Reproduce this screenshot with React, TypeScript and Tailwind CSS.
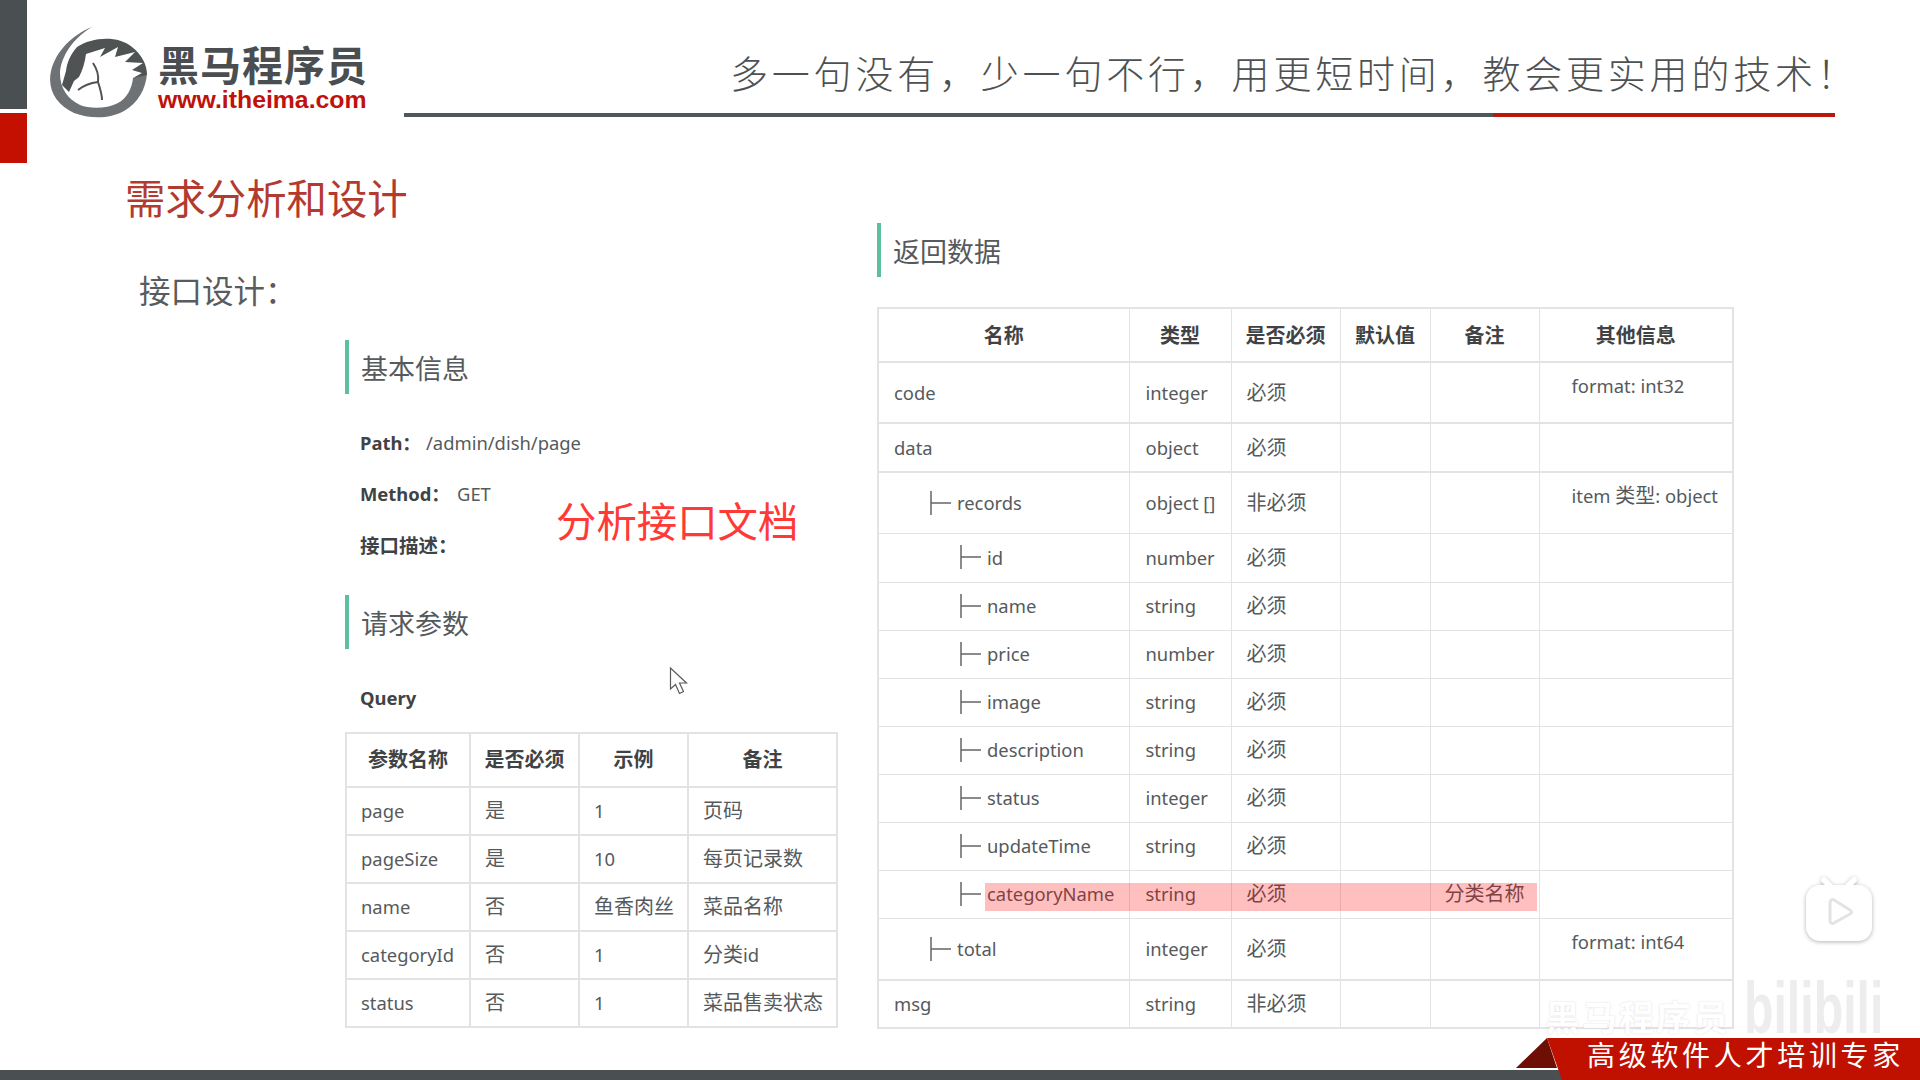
import React from 'react';

const hasCjk = (s: string) => /[\u4e00-\u9fff]/.test(s);

const Txt = ({ value, bold }: { value: string; bold?: boolean }) => (
  <span className={(hasCjk(value) ? 'text-[20px]' : 'text-[18.4px]') + (bold ? ' font-bold' : '')}>{value}</span>
);

const SectionHead = ({ title }: { title: string }) => (
  <div className="h-[54px] flex items-center border-l-[4px] border-[#5cc09c] pl-3 pt-[2px] text-[27px] text-[#555a5c] leading-none">
    {title}
  </div>
);

const Logo = () => (
  <svg viewBox="0 0 100 92" className="w-[100px] h-[92px] shrink-0 ml-[21px] mt-[27px]">
    {/* swoosh ring */}
    <path d="M44 0C24 8 8 24 3 44C-1 62 8 78 26 86C42 92 62 92 76 84C90 76 98 62 99 46L85 51C84 62 78 72 70 76C58 82 42 82 32 78C20 72 12 62 12 46C13 30 24 12 44 0Z" fill="#6e7274" />
    {/* dark crown with mane spikes and the face */}
    <path d="M29 20C44 10 70 8 84 20C94 28 99 38 99 48L85 51L94 46L84 43L95 36L77 35L87 25L67 30L70 20L52 30L57 21L38 27C37 36 34 44 31 50L26 54L21 65L14 58L18 44C19 36 22 28 29 20Z" fill="#4f5354" />
    <path d="M45 36C49 42 51 48 50 55C52 61 54 67 54 73M50 55C42 56 35 59 30 63" stroke="#4f5354" strokeWidth="2" fill="none" />
  </svg>
);

const TreeMark = () => (
  <svg viewBox="0 0 21 24" className="w-[21px] h-[24px] shrink-0">
    <path d="M1 0V24M1 12H21" stroke="#666" strokeWidth="1.5" fill="none" />
  </svg>
);

const leftRows = [
  ['page', '是', '1', '页码'],
  ['pageSize', '是', '10', '每页记录数'],
  ['name', '否', '鱼香肉丝', '菜品名称'],
  ['categoryId', '否', '1', '分类id'],
  ['status', '否', '1', '菜品售卖状态'],
];

const rightRows = [
  { name: 'code', type: 'integer', req: '必须', other: 'format: int32', h: 'h-[61px]', line: 'border-b-2', pad: 'pl-[15px]' },
  { name: 'data', type: 'object', req: '必须', h: 'h-[49px]', line: 'border-b-2', pad: 'pl-[15px]' },
  { name: 'records', level: 1, type: 'object []', req: '非必须', other: 'item 类型: object', h: 'h-[61px]', pad: 'pl-[51px]' },
  { name: 'id', level: 2, type: 'number', req: '必须', h: 'h-[49px]', pad: 'pl-[81px]' },
  { name: 'name', level: 2, type: 'string', req: '必须', h: 'h-[48px]', pad: 'pl-[81px]' },
  { name: 'price', level: 2, type: 'number', req: '必须', h: 'h-[48px]', pad: 'pl-[81px]' },
  { name: 'image', level: 2, type: 'string', req: '必须', h: 'h-[48px]', pad: 'pl-[81px]' },
  { name: 'description', level: 2, type: 'string', req: '必须', h: 'h-[48px]', pad: 'pl-[81px]' },
  { name: 'status', level: 2, type: 'integer', req: '必须', h: 'h-[48px]', pad: 'pl-[81px]' },
  { name: 'updateTime', level: 2, type: 'string', req: '必须', h: 'h-[48px]', pad: 'pl-[81px]' },
  { name: 'categoryName', level: 2, type: 'string', req: '必须', note: '分类名称', h: 'h-[48px]', pad: 'pl-[81px]' },
  { name: 'total', level: 1, type: 'integer', req: '必须', other: 'format: int64', h: 'h-[62px]', line: 'border-b-2', pad: 'pl-[51px]' },
  { name: 'msg', type: 'string', req: '非必须', h: 'h-[48px]', pad: 'pl-[15px]' },
];

const QueryTable = () => (
  <table className="mt-5 w-[491px] table-fixed border-collapse border-2 border-[#e3e3e3] text-[#555a5c]">
    <colgroup>
      <col className="w-[124px]" />
      <col className="w-[109px]" />
      <col className="w-[109px]" />
      <col className="w-[149px]" />
    </colgroup>
    <thead>
      <tr className="h-[54px] text-[#3f4345]">
        {['参数名称', '是否必须', '示例', '备注'].map((h) => (
          <th key={h} className="border-2 border-[#e3e3e3] text-[20px] font-bold text-center">{h}</th>
        ))}
      </tr>
    </thead>
    <tbody>
      {leftRows.map((row) => (
        <tr key={row[0]} className="h-[48px]">
          {row.map((c, i) => (
            <td key={i} className="border-2 border-[#e3e3e3] pl-[14px] whitespace-nowrap">
              {c === '分类id' ? (
                <><span className="text-[20px]">分类</span><span className="text-[18.4px]">id</span></>
              ) : (
                <Txt value={c} />
              )}
            </td>
          ))}
        </tr>
      ))}
    </tbody>
  </table>
);

const ReturnTable = () => (
  <div className="relative mt-[30px] w-[855px]">
    <table className="w-[855px] table-fixed border-collapse border-2 border-[#e3e3e3] text-[#555a5c]">
      <colgroup>
        <col className="w-[251px]" />
        <col className="w-[102px]" />
        <col className="w-[109px]" />
        <col className="w-[90px]" />
        <col className="w-[109px]" />
        <col className="w-[194px]" />
      </colgroup>
      <thead>
        <tr className="h-[54px] text-[#3f4345] border-b-2 border-[#e3e3e3]">
          {['名称', '类型', '是否必须', '默认值', '备注', '其他信息'].map((h) => (
            <th key={h} className="border-x border-[#e3e3e3] pt-[2px] text-[20px] font-bold text-center">{h}</th>
          ))}
        </tr>
      </thead>
      <tbody>
        {rightRows.map((r) => (
          <tr key={r.name + r.type} className={r.h + ' border-[#e3e3e3] ' + (r.line || 'border-b')}>
            <td className={'border-x border-[#e3e3e3] ' + r.pad}>
              <div className="flex items-center gap-[6px]">
                {r.level ? <TreeMark /> : null}
                <Txt value={r.name} />
              </div>
            </td>
            <td className="border-x border-[#e3e3e3] pl-4"><Txt value={r.type} /></td>
            <td className="border-x border-[#e3e3e3] pl-[15px]"><Txt value={r.req} /></td>
            <td className="border-x border-[#e3e3e3]" />
            <td className="border-x border-[#e3e3e3] text-center">{r.note ? <Txt value={r.note} /> : null}</td>
            <td className="border-x border-[#e3e3e3] pl-[32px] pb-[14px] whitespace-nowrap">
              {r.other === 'item 类型: object' ? (
                <span className="text-[18.4px]">item <span className="text-[20px]">类型</span>: object</span>
              ) : r.other ? (
                <Txt value={r.other} />
              ) : null}
            </td>
          </tr>
        ))}
      </tbody>
    </table>
    {/* pink marker over the categoryName row */}
    <div className="absolute left-[108px] top-[576px] w-[552px] h-[28px] bg-[#ff0000]/25" />
  </div>
);

export default function App() {
  return (
    <div className="relative w-[1920px] h-[1080px] overflow-hidden bg-white flex flex-col font-['Noto_Sans','Noto_Sans_CJK_SC',sans-serif]">
      <div className="flex flex-1 min-h-0">
        {/* left rail */}
        <div className="w-[27px] shrink-0 flex flex-col gap-1">
          <div className="h-[109px] bg-[#4a4f51]" />
          <div className="h-[50px] bg-[#c41000]" />
        </div>

        <div className="flex-1 min-w-0 flex flex-col">
          {/* header */}
          <div className="h-[117px] flex shrink-0">
            <Logo />
            <div className="ml-[10px] pt-[41px]">
              <div className="text-[41px] font-bold leading-[44px] tracking-[1px] text-[#4a4e50] font-['Noto_Sans_CJK_SC',sans-serif]">黑马程序员</div>
              <div className="text-[24.8px] font-bold leading-[30px] text-[#c0120a] font-['Liberation_Sans',sans-serif]">www.itheima.com</div>
            </div>
            <div className="ml-auto mr-[85px] w-[1431px] flex flex-col justify-end">
              <div className="pl-[326px] text-[38px] font-light tracking-[3.8px] leading-[50px] mb-4 whitespace-nowrap text-[#4d5152] font-['Noto_Sans_CJK_SC',sans-serif]">
                多一句没有，少一句不行，用更短时间，教会更实用的技术！
              </div>
              <div className="flex h-1">
                <div className="flex-1 bg-[#50565a]" />
                <div className="w-[342px] bg-[#b8190f]" />
              </div>
            </div>
          </div>

          <div className="flex flex-1 min-h-0">
            {/* left column */}
            <div className="w-[811px] shrink-0">
              <h1 className="ml-[98px] mt-[58px] text-[40.4px] leading-[48px] text-[#b33a2e]">需求分析和设计</h1>
              <div className="ml-[112px] mt-[48px] text-[31.5px] leading-[40px] text-[#595c5e]">接口设计：</div>
              <div className="ml-[318px] mt-[29px]">
                <SectionHead title="基本信息" />
                <div className="mt-[35px] ml-[15px] flex flex-col gap-[23px] text-[#555a5c]">
                  <div className="h-7 leading-7 flex">
                    <span className="w-[66px] text-[18.4px] font-bold text-[#3f4345]">Path：</span>
                    <span className="text-[18.4px]">/admin/dish/page</span>
                  </div>
                  <div className="h-7 leading-7 flex">
                    <span className="w-[97px] text-[18.4px] font-bold text-[#3f4345]">Method：</span>
                    <span className="text-[18.4px]">GET</span>
                  </div>
                  <div className="h-7 leading-7 mt-[1px] text-[19.5px] font-bold text-[#3f4345]">接口描述：</div>
                </div>
                <div className="mt-[35px]">
                  <SectionHead title="请求参数" />
                </div>
                <div className="mt-[35px] ml-[15px] h-7 leading-7 text-[18.4px] font-bold text-[#3f4345]">Query</div>
                <QueryTable />
              </div>
            </div>

            {/* right column */}
            <div className="ml-[39px] pt-[106px] w-[855px] shrink-0">
              <SectionHead title="返回数据" />
              <ReturnTable />
            </div>
          </div>
        </div>
      </div>

      <div className="h-[10px] shrink-0 bg-[#4a4f51]" />

      {/* overlays on the slide */}
      <div className="absolute left-[556px] top-[498px] text-[40.4px] leading-[48px] text-[#ff3a36]">分析接口文档</div>

      <svg viewBox="0 0 20 28" className="absolute left-[669px] top-[667px] w-[20px] h-[28px]">
        <path d="M1.500 1V22L6.500 17.500L10.500 26.500L14.500 24.500L10.500 16H17.500Z" fill="#fff" stroke="#5a5a5a" strokeWidth="1.200" />
      </svg>

      <svg viewBox="0 0 68 66" className="absolute left-[1805px] top-[876px] w-[68px] h-[66px] drop-shadow-[0_1px_2px_rgba(0,0,0,0.3)]">
        <path d="M19 4L27 12M49 4L41 12" stroke="#fff" strokeWidth="6" strokeLinecap="round" />
        <rect x="1" y="9" width="66" height="56" rx="14" fill="#fff" />
        <path d="M25 27C25 24 27 23 29 24L45 34C47 35 47 37 45 38L29 47C27 48 25 47 25 45Z" fill="#fff" stroke="#e3e3e3" strokeWidth="3" />
      </svg>

      <div className="absolute left-[1545px] top-[998px] text-[35px] tracking-[2px] leading-[40px] font-bold text-white [text-shadow:0_0_2px_rgba(190,190,190,0.6)]">黑马程序员</div>
      <div className="absolute left-[1744px] top-[966px] origin-left scale-x-[0.67] text-[72px] leading-[84px] font-bold text-[#dcdcdc]/50 font-['Liberation_Sans',sans-serif]">bilibili</div>

      <svg viewBox="0 0 42 31" className="absolute left-[1516px] top-[1038px] w-[42px] h-[31px]">
        <path d="M0 30L31 0L41 30Z" fill="#6d0f05" />
      </svg>
      <div className="absolute right-0 bottom-0 w-[373px] h-[42px] pb-[10px] pr-4 bg-[#c01000] [clip-path:polygon(0_0,100%_0,100%_100%,15px_100%)] flex items-center justify-end">
        <span className="text-[28px] leading-[32px] tracking-[3.7px] text-white whitespace-nowrap font-['Noto_Sans_CJK_SC',sans-serif]">高级软件人才培训专家</span>
      </div>
    </div>
  );
}
